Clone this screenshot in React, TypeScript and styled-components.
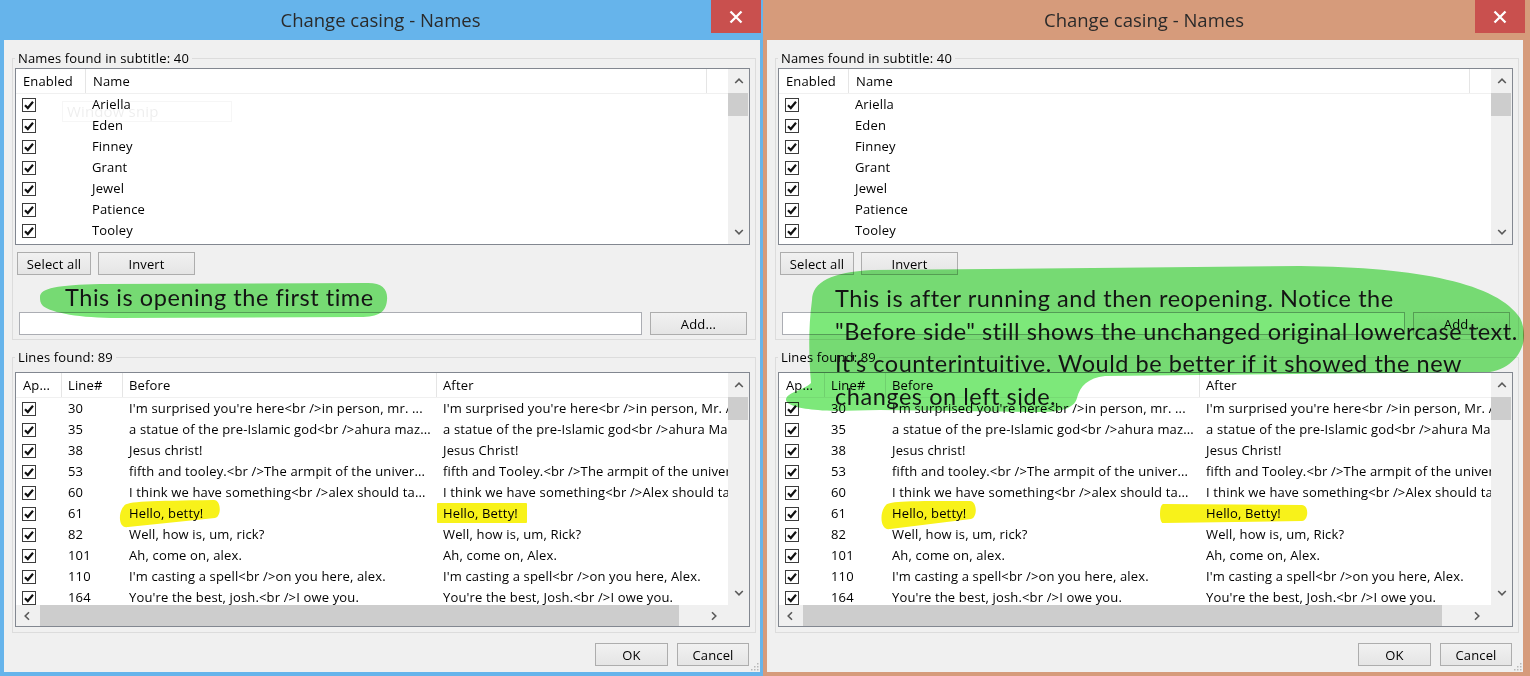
import React from "react";
import styled, { createGlobalStyle } from "styled-components";

const UI_FONT = `"Open Sans", "Noto Sans", "DejaVu Sans", sans-serif`;

const GlobalStyle = createGlobalStyle`
  html, body { margin: 0; padding: 0; background: #f0f0f0; overflow: hidden; }
  *, *::before, *::after { box-sizing: border-box; }
`;

const Screen = styled.div`
  position: relative;
  display: flex;
  width: 1530px;
  height: 676px;
  overflow: hidden;
  font-family: ${UI_FONT};
  font-size: 13px;
  letter-spacing: 0.15px;
  color: #000;
`;

const Frame = styled.div<{ $color: string; $width: number }>`
  flex: none;
  width: ${(p) => p.$width}px;
  height: 676px;
  display: flex;
  flex-direction: column;
  background: ${(p) => p.$color};
`;

const TitleBar = styled.div<{ $padRight: number }>`
  flex: none;
  height: 40px;
  display: grid;
  grid-template-columns: 1fr auto 1fr;
  padding-right: ${(p) => p.$padRight}px;
`;

const TitleText = styled.div`
  grid-column: 2;
  align-self: center;
  margin-top: -2px;
  font-size: 18.5px;
  letter-spacing: 0;
  color: #2a2a2a;
  white-space: nowrap;
`;

const CloseButton = styled.div`
  grid-column: 3;
  justify-self: end;
  align-self: start;
  width: 50px;
  height: 33px;
  background: #c9504e;
  display: flex;
  align-items: center;
  justify-content: center;
`;

const Client = styled.div<{ $right: number }>`
  position: relative;
  flex: 1;
  margin: 0 ${(p) => p.$right}px 4px 4px;
  background: #f0f0f0;
  display: flex;
  flex-direction: column;
  padding: 10px 4px 0 8px;
`;

const Group = styled.fieldset<{ $mt: number; $pt: number; $pb: number }>`
  margin: ${(p) => p.$mt}px 0 0 0;
  min-width: 0;
  border: 1px solid #dcdcdc;
  padding: ${(p) => p.$pt}px 5px ${(p) => p.$pb}px 2px;
  display: flex;
  flex-direction: column;
`;

const Legend = styled.legend`
  padding: 0 3px;
  line-height: 16px;
  font-size: 13px;
`;

const ListView = styled.div<{ $height: number; $hscroll?: boolean }>`
  height: ${(p) => p.$height}px;
  border: 1px solid #828790;
  background: #fff;
  display: grid;
  grid-template-columns: minmax(0, 1fr) 21px;
  grid-template-rows: ${(p) => (p.$hscroll ? "minmax(0, 1fr) 21px" : "minmax(0, 1fr)")};
  overflow: hidden;
`;

const ListBody = styled.div`
  min-width: 0;
  overflow: hidden;
`;

const HeaderRow = styled.div`
  display: flex;
  height: 25px;
  border-bottom: 1px solid #f0f0f0;
`;

const HeaderCell = styled.div<{ $w: number; $pl?: number }>`
  flex: none;
  width: ${(p) => p.$w}px;
  padding-left: ${(p) => p.$pl ?? 6}px;
  border-right: 1px solid #e5e5e5;
  line-height: 25px;
  white-space: nowrap;
  overflow: hidden;
`;

const Row = styled.div`
  display: flex;
  height: 21px;
  align-items: center;
`;

const Cell = styled.div<{ $w: number }>`
  flex: none;
  width: ${(p) => p.$w}px;
  padding-left: 6px;
  line-height: 21px;
  white-space: nowrap;
  overflow: hidden;
`;

const CheckCell = styled.div<{ $w: number }>`
  flex: none;
  width: ${(p) => p.$w}px;
  padding-left: 6px;
  display: flex;
  align-items: center;
`;

const CheckBox = styled.div`
  width: 14px;
  height: 14px;
  border: 1px solid #3c3c3c;
  background: #fff;
  display: flex;
  align-items: center;
  justify-content: center;
`;

const VScroll = styled.div`
  display: flex;
  flex-direction: column;
  background: #f0f0f0;
`;

const HScroll = styled.div`
  display: flex;
  background: #f0f0f0;
`;

const ArrowBox = styled.div<{ $w?: number; $h?: number }>`
  flex: none;
  width: ${(p) => (p.$w ? `${p.$w}px` : "100%")};
  height: ${(p) => (p.$h ? `${p.$h}px` : "100%")};
  display: flex;
  align-items: center;
  justify-content: center;
`;

const VThumb = styled.div`
  flex: none;
  height: 23px;
  margin: 1px 1px 0 0;
  background: #cdcdcd;
`;

const HThumb = styled.div<{ $w: number }>`
  flex: none;
  width: ${(p) => p.$w}px;
  margin-left: 2px;
  background: #cdcdcd;
`;

const Spacer = styled.div`
  flex: 1;
`;

const Corner = styled.div`
  background: #f0f0f0;
`;

const Button = styled.button<{ $w: number }>`
  flex: none;
  width: ${(p) => p.$w}px;
  height: 23px;
  padding: 0;
  border: 1px solid #adadad;
  background: linear-gradient(#f1f1f1, #e5e5e5);
  font-family: ${UI_FONT};
  font-size: 13px;
  letter-spacing: 0.15px;
  color: #000;
  white-space: nowrap;
`;

const ButtonRow = styled.div<{ $mt: number; $ml?: number; $mr?: number; $gap: number; $end?: boolean }>`
  display: flex;
  gap: ${(p) => p.$gap}px;
  margin: ${(p) => p.$mt}px ${(p) => p.$mr ?? 0}px 0 ${(p) => p.$ml ?? 0}px;
  justify-content: ${(p) => (p.$end ? "flex-end" : "flex-start")};
`;

const TextBox = styled.div`
  flex: none;
  width: 623px;
  height: 23px;
  border: 1px solid #abadb3;
  background: #fff;
`;

const Ghost = styled.div`
  position: absolute;
  left: 58px;
  top: 61px;
  width: 170px;
  height: 21px;
  border: 1px solid rgba(0, 0, 0, 0.035);
  padding-left: 4px;
  font-size: 15px;
  line-height: 19px;
  color: rgba(0, 0, 0, 0.07);
  pointer-events: none;
`;

const Grip = styled.svg`
  position: absolute;
  right: 1px;
  bottom: 1px;
`;

const Overlay = styled.svg`
  position: absolute;
  left: 0;
  top: 0;
  width: 1530px;
  height: 676px;
  pointer-events: none;
  mix-blend-mode: multiply;
`;

const Note = styled.div<{ $x: number; $y: number }>`
  position: absolute;
  left: ${(p) => p.$x}px;
  top: ${(p) => p.$y}px;
  font-family: Lato, "Open Sans", sans-serif;
  font-size: 23.5px;
  letter-spacing: 0.55px;
  line-height: 32.5px;
  color: #141414;
  white-space: pre;
  pointer-events: none;
`;

const Chevron = ({ dir }: { dir: "up" | "down" | "left" | "right" }) => {
  const rot = { up: 0, right: 90, down: 180, left: 270 }[dir];
  return (
    <svg width="10" height="10" viewBox="0 0 10 10" style={{ transform: `rotate(${rot}deg)` }}>
      <polyline points="1.2,7 5,3.2 8.8,7" fill="none" stroke="#5a5a5a" strokeWidth="1.6" />
    </svg>
  );
};

const Check = () => (
  <CheckBox>
    <svg width="12" height="12" viewBox="0 0 12 12">
      <polyline points="2,6.2 4.8,9 10,2.8" fill="none" stroke="#111" strokeWidth="2.2" />
    </svg>
  </CheckBox>
);

const CloseIcon = () => (
  <svg width="14" height="14" viewBox="0 0 14 14">
    <path d="M1.5,1.5 L12.5,12.5 M12.5,1.5 L1.5,12.5" stroke="#fff" strokeWidth="2.3" />
  </svg>
);

const names = ["Ariella", "Eden", "Finney", "Grant", "Jewel", "Patience", "Tooley", "Zack"];

const lines: [string, string, string][] = [
  ["30", "I'm surprised you're here<br />in person, mr. ...", "I'm surprised you're here<br />in person, Mr. Anderson."],
  ["35", "a statue of the pre-Islamic god<br />ahura maz...", "a statue of the pre-Islamic god<br />ahura Mazda."],
  ["38", "Jesus christ!", "Jesus Christ!"],
  ["53", "fifth and tooley.<br />The armpit of the univer...", "fifth and Tooley.<br />The armpit of the universe."],
  ["60", "I think we have something<br />alex should ta...", "I think we have something<br />Alex should take."],
  ["61", "Hello, betty!", "Hello, Betty!"],
  ["82", "Well, how is, um, rick?", "Well, how is, um, Rick?"],
  ["101", "Ah, come on, alex.", "Ah, come on, Alex."],
  ["110", "I'm casting a spell<br />on you here, alex.", "I'm casting a spell<br />on you here, Alex."],
  ["164", "You're the best, josh.<br />I owe you.", "You're the best, Josh.<br />I owe you."],
];

function DialogWindow({
  color,
  width,
  padRight,
  clientRight,
  ghost,
}: {
  color: string;
  width: number;
  padRight: number;
  clientRight: number;
  ghost?: boolean;
}) {
  return (
    <Frame $color={color} $width={width}>
      <TitleBar $padRight={padRight}>
        <TitleText>Change casing - Names</TitleText>
        <CloseButton>
          <CloseIcon />
        </CloseButton>
      </TitleBar>
      <Client $right={clientRight}>
        <Group $mt={0} $pt={2} $pb={4}>
          <Legend>Names found in subtitle: 40</Legend>
          <ListView $height={177}>
            <ListBody>
              <HeaderRow>
                <HeaderCell $w={70} $pl={7}>Enabled</HeaderCell>
                <HeaderCell $w={621} $pl={7}>Name</HeaderCell>
              </HeaderRow>
              {names.map((n) => (
                <Row key={n}>
                  <CheckCell $w={70}>
                    <Check />
                  </CheckCell>
                  <Cell $w={621}>{n}</Cell>
                </Row>
              ))}
            </ListBody>
            <VScroll>
              <ArrowBox $h={23}>
                <Chevron dir="up" />
              </ArrowBox>
              <VThumb />
              <Spacer />
              <ArrowBox $h={24}>
                <Chevron dir="down" />
              </ArrowBox>
            </VScroll>
          </ListView>
          <ButtonRow $mt={7} $ml={2} $gap={7}>
            <Button $w={74}>Select all</Button>
            <Button $w={97}>Invert</Button>
          </ButtonRow>
          <ButtonRow $mt={37} $ml={4} $gap={8}>
            <TextBox />
            <Button $w={97}>Add...</Button>
          </ButtonRow>
        </Group>
        <Group $mt={9} $pt={7} $pb={5}>
          <Legend>Lines found: 89</Legend>
          <ListView $height={255} $hscroll>
            <ListBody>
              <HeaderRow>
                <HeaderCell $w={46} $pl={7}>Ap...</HeaderCell>
                <HeaderCell $w={61}>Line#</HeaderCell>
                <HeaderCell $w={314}>Before</HeaderCell>
                <HeaderCell $w={420}>After</HeaderCell>
              </HeaderRow>
              {lines.map(([num, before, after]) => (
                <Row key={num}>
                  <CheckCell $w={46}>
                    <Check />
                  </CheckCell>
                  <Cell $w={61}>{num}</Cell>
                  <Cell $w={314}>{before}</Cell>
                  <Cell $w={420}>{after}</Cell>
                </Row>
              ))}
            </ListBody>
            <VScroll>
              <ArrowBox $h={23}>
                <Chevron dir="up" />
              </ArrowBox>
              <VThumb />
              <Spacer />
              <ArrowBox $h={24}>
                <Chevron dir="down" />
              </ArrowBox>
            </VScroll>
            <HScroll>
              <ArrowBox $w={22}>
                <Chevron dir="left" />
              </ArrowBox>
              <HThumb $w={639} />
              <Spacer />
              <ArrowBox $w={28}>
                <Chevron dir="right" />
              </ArrowBox>
            </HScroll>
            <Corner />
          </ListView>
        </Group>
        <ButtonRow $mt={10} $mr={7} $gap={9} $end>
          <Button $w={73}>OK</Button>
          <Button $w={72}>Cancel</Button>
        </ButtonRow>
        {ghost && <Ghost>Window snip</Ghost>}
        <Grip width="8" height="8" viewBox="0 0 8 8">
          <rect x="6" y="0" width="1.5" height="1.5" fill="#b8b8b8" />
          <rect x="3" y="3" width="1.5" height="1.5" fill="#b8b8b8" />
          <rect x="6" y="3" width="1.5" height="1.5" fill="#b8b8b8" />
          <rect x="0" y="6" width="1.5" height="1.5" fill="#b8b8b8" />
          <rect x="3" y="6" width="1.5" height="1.5" fill="#b8b8b8" />
          <rect x="6" y="6" width="1.5" height="1.5" fill="#b8b8b8" />
        </Grip>
      </Client>
    </Frame>
  );
}

export default function App() {
  return (
    <>
      <GlobalStyle />
      <Screen>
        <DialogWindow color="#66b4eb" width={763} padRight={2} clientRight={3} ghost />
        <DialogWindow color="#d69b7b" width={767} padRight={5} clientRight={7} />
        <Overlay viewBox="0 0 1530 676">
          <g fill="#7de87a">
            <path d="M40,297 C40,288 58,285 100,284 L368,283 C383,283 388,290 387,300 C386,312 379,317 360,317 L118,318 C80,318 52,313 43,306 C40,303 40,300 40,297 Z" />
            <path d="M812,300 C812,282 832,272 872,270 L1300,266 C1420,267 1498,284 1520,318 C1532,343 1516,368 1490,372 L1105,376 C1088,378 1080,386 1077,398 C1074,409 1060,412 1040,412 L880,410 C855,410 835,412 818,410 C800,409 785,405 786,399 C788,392 804,390 811,383 C809,358 808,330 812,300 Z" />
          </g>
          <g fill="#f8f21a">
            <path d="M124,506 C127,501 150,501 214,500 C221,500 222,516 215,518 L128,527 C118,529 118,512 124,506 Z" />
            <rect x="437" y="503" width="90" height="20" rx="1" />
            <path d="M886,505 C889,501 910,501 970,501 C977,501 978,517 971,519 L890,529 C880,531 879,512 886,505 Z" />
            <path d="M1163,504 L1302,505 C1309,505 1309,520 1302,521 L1163,523 C1159,523 1159,505 1163,504 Z" />
          </g>
        </Overlay>
        <Note $x={65} $y={281}>This is opening the first time</Note>
        <Note $x={835} $y={282}>
          {"This is after running and then reopening. Notice the\n\"Before side\" still shows the unchanged original lowercase text.\nIt's counterintuitive. Would be better if it showed the new\nchanges on left side."}
        </Note>
      </Screen>
    </>
  );
}
